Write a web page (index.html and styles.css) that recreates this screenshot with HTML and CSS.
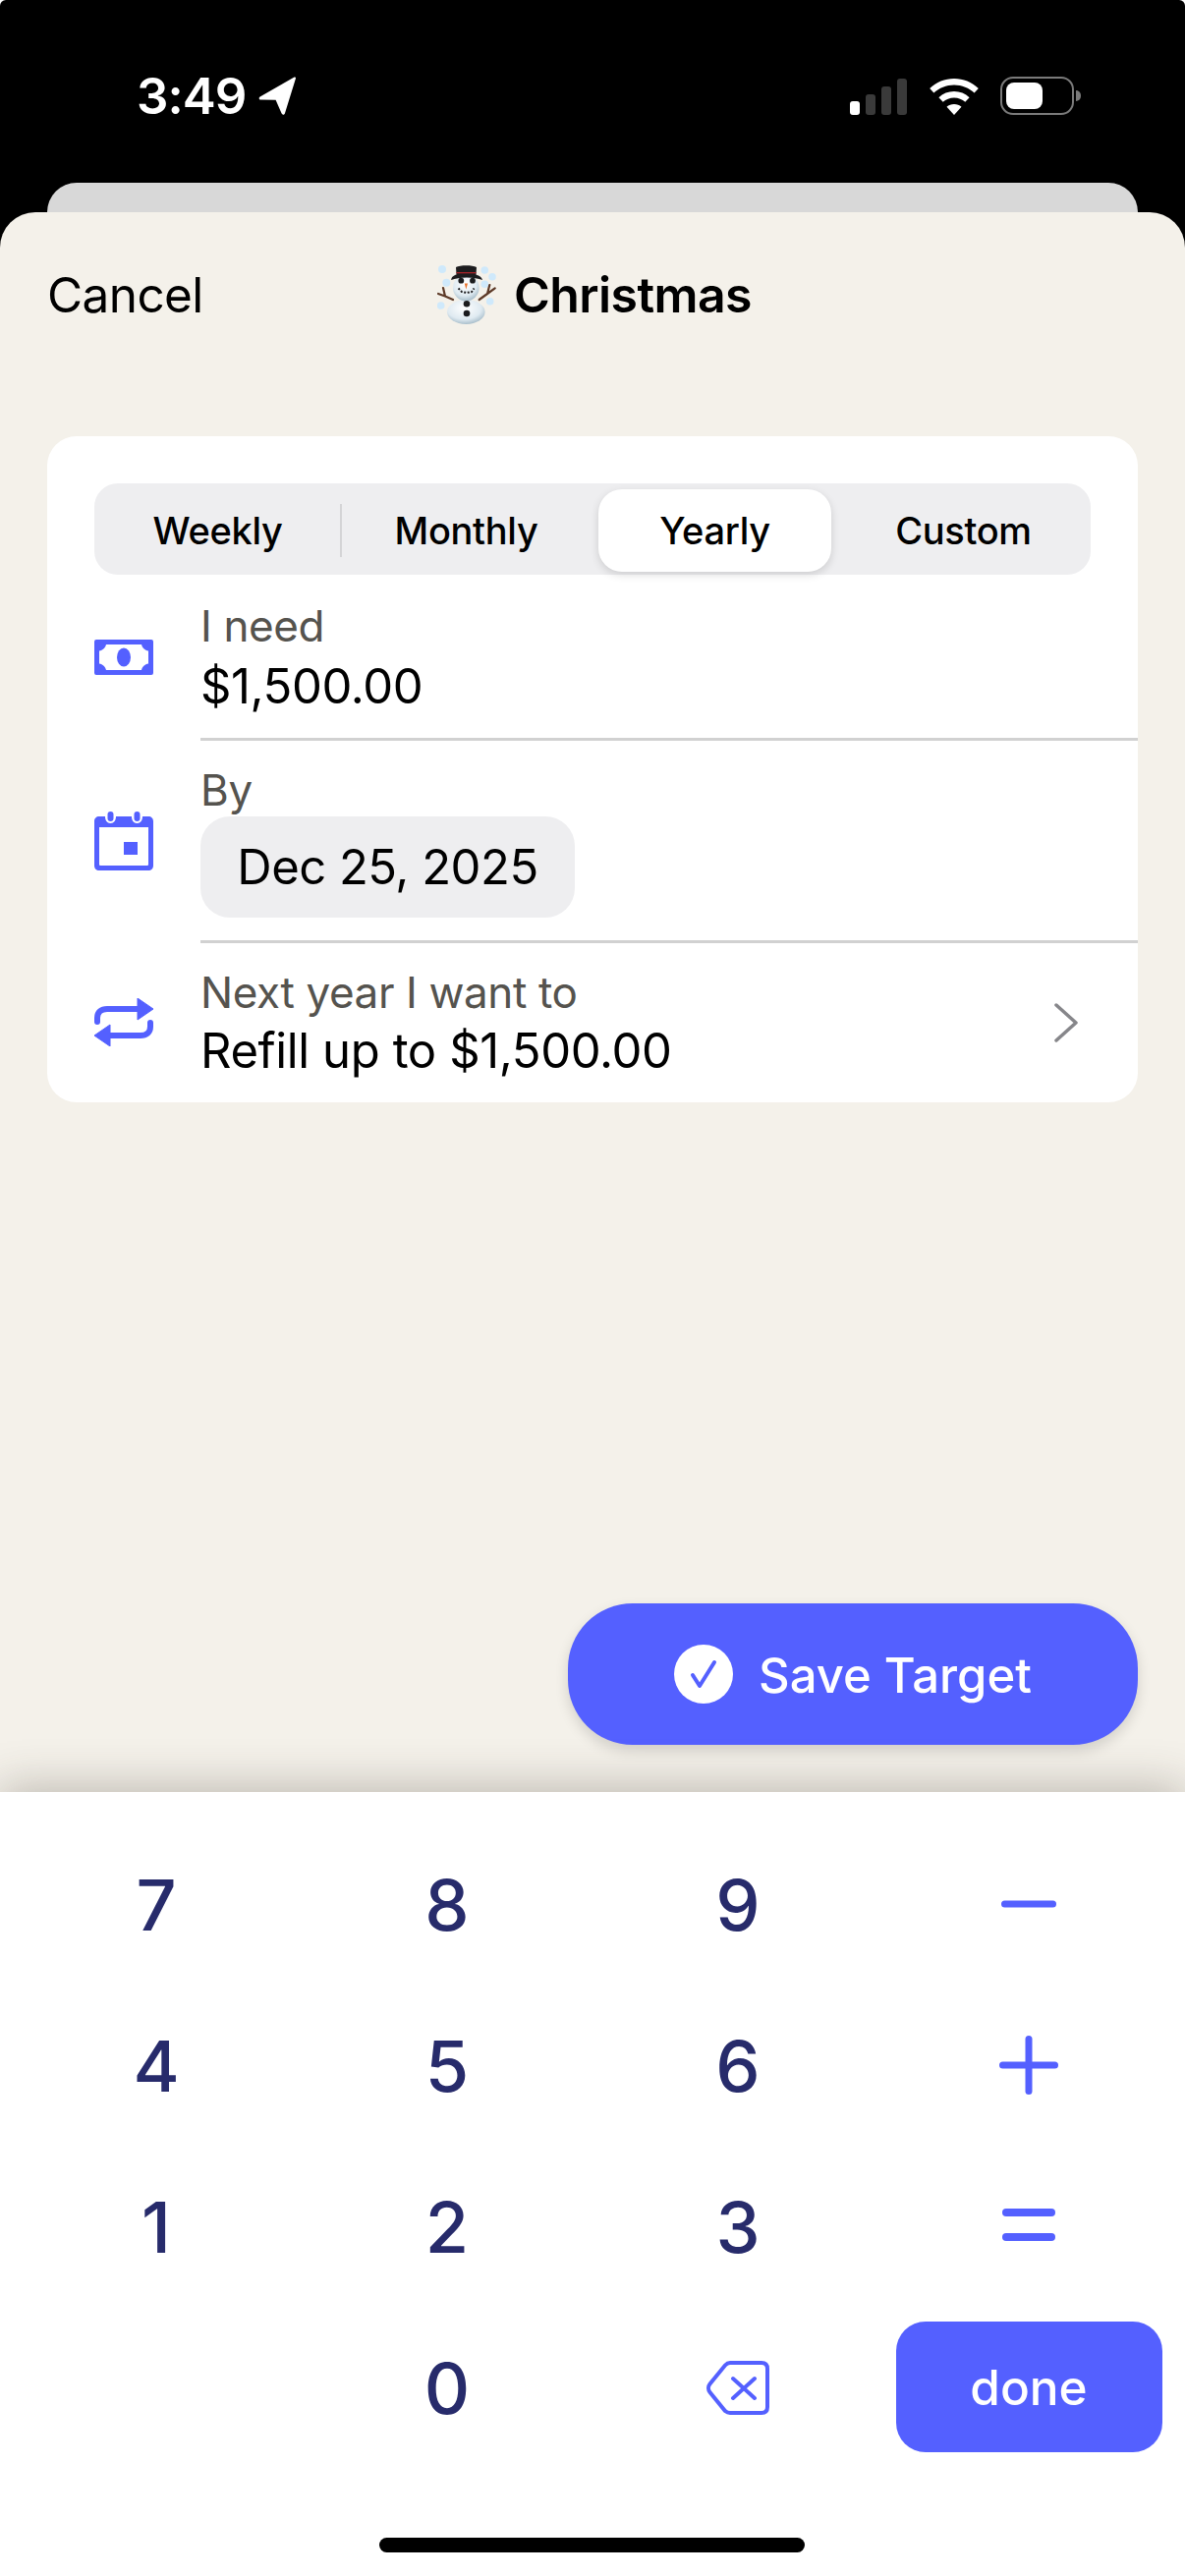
FILE: index.html
```html
<!DOCTYPE html>
<html lang="en">
<head>
    <meta charset="utf-8">
    <title>Christmas Target</title>
    <link rel="stylesheet" href="styles.css">
</head>
<body>
    <div class="screen">
        <div class="status-bar">
            <div class="status-left">
                <span class="time">3:49</span>
                <svg class="location-arrow" viewBox="0 0 38 39"><path d="M36.5 0.6 L1.6 20.4 C0 21.4 0.6 23.6 2.4 23.6 L17.6 23.8 L23.6 37.6 C24.3 39.2 26.3 39 26.9 37.4 L37.9 2 C38.3 0.8 37.5 0.2 36.5 0.6 Z" fill="#fff"/></svg>
            </div>
            <div class="status-right">
                <svg class="signal" viewBox="0 0 58 37">
                    <rect x="0" y="23" width="10" height="14" rx="3" fill="#fff"/>
                    <rect x="16" y="16" width="10" height="21" rx="3" fill="#3a3a3a"/>
                    <rect x="32" y="8" width="10" height="29" rx="3" fill="#3a3a3a"/>
                    <rect x="48" y="0" width="10" height="37" rx="3" fill="#3a3a3a"/>
                </svg>
                <svg class="wifi" viewBox="0 0 50 37">
                    <path d="M25 0 C34.5 0 43 3.6 49.8 10 L45.6 14.6 C40.2 9.4 33 6.4 25 6.4 C17 6.4 9.8 9.4 4.4 14.6 L0.2 10 C7 3.6 15.500 0 25 0 Z" fill="#fff"/>
                    <path d="M25 13 C31 13 36.400 15.200 40.600 19.200 L36.300 23.800 C33.300 21 29.400 19.400 25 19.400 C20.600 19.400 16.700 21 13.700 23.800 L9.400 19.200 C13.600 15.200 19 13 25 13 Z" fill="#fff"/>
                    <path d="M25 26 C27.900 26 30.500 27 32.500 28.800 L25 37 L17.500 28.800 C19.500 27 22.100 26 25 26 Z" fill="#fff"/>
                </svg>
                <div class="battery">
                    <div class="battery-fill"></div>
                    <div class="battery-nub"></div>
                </div>
            </div>
        </div>

        <div class="back-sheet"></div>

        <div class="sheet">
            <div class="sheet-header">
                <span class="cancel">Cancel</span>
                <div class="sheet-title">
                    <svg class="snowman" viewBox="0 0 60 60">
                        <defs>
                            <radialGradient id="snowBody" cx="0.45" cy="0.35" r="0.75">
                                <stop offset="0" stop-color="#ffffff"/>
                                <stop offset="0.6" stop-color="#dfeaf1"/>
                                <stop offset="1" stop-color="#8ea9b8"/>
                            </radialGradient>
                        </defs>
                        <g fill="#cfe9fb">
                            <circle cx="5" cy="4" r="4"/>
                            <circle cx="9.300" cy="17.700" r="4"/>
                            <circle cx="3.700" cy="41" r="3.800"/>
                            <circle cx="48.300" cy="5" r="3.800"/>
                            <circle cx="56" cy="11.700" r="3.800"/>
                            <circle cx="48.300" cy="19.300" r="3.800"/>
                            <circle cx="53.700" cy="36.700" r="3.800"/>
                        </g>
                        <path d="M16 35 L8 31.500 L1 29 M8 31.500 L6 23" stroke="#5d3a28" stroke-width="2.200" fill="none" stroke-linecap="round"/>
                        <path d="M42.700 35 L51 29 L58.700 23.300 M51 29 L53.300 20" stroke="#5d3a28" stroke-width="2.200" fill="none" stroke-linecap="round"/>
                        <ellipse cx="29.300" cy="47.500" rx="19.300" ry="12.500" fill="url(#snowBody)"/>
                        <circle cx="29.300" cy="23" r="13.300" fill="url(#snowBody)"/>
                        <path d="M14 15 C15 11 17 10.500 19.500 9.500 L19 2 C23 -0.500 36 -0.500 40 2 L39.500 9.500 C42 10.500 45 11.500 46 15 C38 11.500 22 11.500 14 15 Z" fill="#1c1c1e"/>
                        <rect x="19.500" y="7" width="20" height="1.300" fill="#a8242a"/>
                        <circle cx="24.300" cy="15.700" r="2.900" fill="#1c1c1e"/>
                        <circle cx="36" cy="15.700" r="2.900" fill="#1c1c1e"/>
                        <path d="M27.800 18.500 L31 18.500 L29.300 24.500 Z" fill="#e8702a"/>
                        <path d="M21.500 23.500 L25 27 L30 28 L35 27 L37.500 23.500" stroke="#1c1c1e" stroke-width="2" stroke-dasharray="2 1.600" fill="none"/>
                        <circle cx="30" cy="39.300" r="3.300" fill="#1c1c1e"/>
                        <circle cx="30" cy="49" r="3.300" fill="#1c1c1e"/>
                    </svg>
                    <span>Christmas</span>
                </div>
            </div>

            <div class="card">
                <div class="segments">
                    <div class="segment">Weekly</div>
                    <div class="segment-divider"></div>
                    <div class="segment">Monthly</div>
                    <div class="segment selected">Yearly</div>
                    <div class="segment">Custom</div>
                </div>

                <div class="row row-need">
                    <svg class="row-icon" viewBox="0 0 60 36">
                        <path fill-rule="evenodd" d="M2 0 H58 A2 2 0 0 1 60 2 V34 A2 2 0 0 1 58 36 H2 A2 2 0 0 1 0 34 V2 A2 2 0 0 1 2 0 Z M12 5 C11.500 8 8.500 11 5 11.500 V24.500 C8.500 25 11.500 28 12 31 H48 C48.500 28 51.500 25 55 24.500 V11.500 C51.500 11 48.500 8 48 5 Z" fill="#5460ff"/>
                        <ellipse cx="30" cy="18" rx="7" ry="9.500" fill="#5460ff"/>
                    </svg>
                    <div class="row-text">
                        <div class="row-label">I need</div>
                        <div class="row-value">$1,500.00</div>
                    </div>
                </div>

                <div class="row row-date">
                    <svg class="row-icon" viewBox="0 0 60 60">
                        <path fill-rule="evenodd" d="M5 5 H11 C11 9 13 12 16.500 12 C20 12 22 9 22 5 H38 C38 9 40 12 43.500 12 C47 12 49 9 49 5 H55 C58 5 60 7 60 10 V55 C60 58 58 60 55 60 H5 C2 60 0 58 0 55 V10 C0 7 2 5 5 5 Z M5 16 V53.500 C5 54.500 5.500 55 6.500 55 H53.500 C54.500 55 55 54.500 55 53.500 V16 Z" fill="#5460ff"/>
                        <rect x="13.500" y="0" width="6" height="10" rx="3" fill="#5460ff"/>
                        <rect x="40.500" y="0" width="6" height="10" rx="3" fill="#5460ff"/>
                        <rect x="30" y="31" width="14" height="13" fill="#5460ff"/>
                    </svg>
                    <div class="row-text">
                        <div class="row-label">By</div>
                        <div class="date-chip">Dec 25, 2025</div>
                    </div>
                </div>

                <div class="row row-repeat">
                    <svg class="row-icon" viewBox="0 0 60 49">
                        <path d="M3 24 V20 C3 14 7 11 13 11 H46" stroke="#5460ff" stroke-width="6" stroke-linecap="round" fill="none"/>
                        <path d="M44 0 L60 11 L44 22 Z" fill="#5460ff" stroke="#5460ff" stroke-width="1" stroke-linejoin="round"/>
                        <path d="M57 25 V29 C57 35 53 38 47 38 H14" stroke="#5460ff" stroke-width="6" stroke-linecap="round" fill="none"/>
                        <path d="M16 27 L0 38 L16 49 Z" fill="#5460ff" stroke="#5460ff" stroke-width="1" stroke-linejoin="round"/>
                    </svg>
                    <div class="row-text">
                        <div class="row-label">Next year I want to</div>
                        <div class="row-value">Refill up to $1,500.00</div>
                    </div>
                    <svg class="chevron" viewBox="0 0 24 40"><path d="M2 2 L22 20 L2 38" stroke="#86868a" stroke-width="3.500" fill="none" stroke-linecap="round" stroke-linejoin="round"/></svg>
                </div>
            </div>

            <div class="sheet-footer">
                <div class="save-button">
                    <svg class="save-check" viewBox="0 0 60 60">
                        <circle cx="30" cy="30" r="30" fill="#fff"/>
                        <path d="M19 31 L26 42 L41 18" stroke="#5460ff" stroke-width="4" fill="none" stroke-linecap="round" stroke-linejoin="round"/>
                    </svg>
                    <span class="save-label">Save Target</span>
                </div>
            </div>
        </div>

        <div class="keypad">
            <div class="key">7</div>
            <div class="key">8</div>
            <div class="key">9</div>
            <div class="key"><svg class="op-icon" viewBox="0 0 60 60"><rect x="2" y="26.500" width="56" height="7" rx="3.500" fill="#5460ff"/></svg></div>
            <div class="key">4</div>
            <div class="key">5</div>
            <div class="key">6</div>
            <div class="key"><svg class="op-icon" viewBox="0 0 60 60"><rect x="0" y="26.500" width="60" height="7" rx="3.500" fill="#5460ff"/><rect x="26.500" y="0" width="7" height="60" rx="3.500" fill="#5460ff"/></svg></div>
            <div class="key">1</div>
            <div class="key">2</div>
            <div class="key">3</div>
            <div class="key"><svg class="op-icon" viewBox="0 0 60 60"><rect x="3" y="12" width="54" height="8" rx="4" fill="#5460ff"/><rect x="3" y="37" width="54" height="8" rx="4" fill="#5460ff"/></svg></div>
            <div class="key"></div>
            <div class="key">0</div>
            <div class="key"><svg class="backspace" viewBox="0 0 64 55">
                <path d="M24 2 H56 C60 2 62 4 62 8 V47 C62 51 60 53 56 53 H24 C22 53 20.500 52.300 19 51 L3.500 32 C1.500 29.500 1.500 26 3.500 23.500 L19 4.500 C20.500 2.800 22 2 24 2 Z" stroke="#5460ff" stroke-width="4" fill="none"/>
                <path d="M27 18 L49 38 M49 18 L27 38" stroke="#5460ff" stroke-width="4" stroke-linecap="round" fill="none"/>
            </svg></div>
            <div class="key"><div class="done-button">done</div></div>
        </div>

        <div class="home-area"><div class="home-bar"></div></div>
    </div>
</body>
</html>
```

FILE: styles.css
```css
* {
    box-sizing: border-box;
}

body {
    margin: 0;
    font-family: Inter, "Liberation Sans", sans-serif;
    background-color: #fff;
    color: #000;
}

.screen {
    width: 1206px;
    height: 2622px;
    display: flex;
    flex-direction: column;
    overflow: hidden;
    background-color: #000;
    border-radius: 6px 6px 0 0;
}

/* status bar */
.status-bar {
    height: 186px;
    flex: none;
    padding: 78px 113px 0 139px;
    display: flex;
    justify-content: space-between;
    align-items: flex-start;
}

.status-left {
    display: flex;
    align-items: center;
    gap: 13px;
    height: 39px;
}

.time {
    color: #fff;
    font-size: 51px;
    font-weight: 600;
    line-height: 39px;
    letter-spacing: -1px;
}

.location-arrow {
    width: 38px;
    height: 39px;
}

.status-right {
    display: flex;
    align-items: center;
    height: 39px;
}

.signal {
    width: 58px;
    height: 37px;
    margin-top: 1px;
    margin-right: 23px;
}

.wifi {
    width: 50px;
    height: 37px;
    margin-top: 1px;
    margin-right: 22px;
}

.battery {
    width: 75px;
    height: 39px;
    padding: 4px;
    border: 2px solid #7a7a7a;
    border-radius: 13px;
    position: relative;
}

.battery-fill {
    width: 37px;
    height: 27px;
    background-color: #fff;
    border-radius: 8px;
}

.battery-nub {
    position: absolute;
    right: -9px;
    top: 12px;
    width: 5px;
    height: 11px;
    background-color: #7a7a7a;
    border-radius: 0 6px 6px 0;
}

.back-sheet {
    height: 60px;
    margin: 0 48px -30px;
    flex: none;
    background-color: #d8d8d8;
    border-radius: 30px 30px 0 0;
}

/* main sheet */
.sheet {
    flex: 1;
    position: relative;
    display: flex;
    flex-direction: column;
    padding: 0 48px;
    background-color: #f4f1ea;
    border-radius: 36px 36px 0 0;
}

.sheet-header {
    height: 228px;
    flex: none;
    padding-top: 48px;
    display: grid;
    grid-template-columns: 1fr auto 1fr;
    align-items: start;
}

.cancel {
    font-size: 49.500px;
    line-height: 72px;
    letter-spacing: -0.6px;
}

.sheet-title {
    display: flex;
    align-items: center;
    gap: 18px;
    height: 72px;
    padding-left: 4px;
    font-size: 50px;
    font-weight: 600;
    letter-spacing: -0.6px;
}

.snowman {
    width: 60px;
    height: 60px;
}

.card {
    flex: none;
    background-color: #fff;
    border-radius: 30px;
    padding: 48px 0 0 48px;
    height: 678px;
}

.segments {
    width: 1014px;
    height: 93px;
    background-color: #eeeef0;
    border-radius: 24px;
    padding: 6px 0 3px;
    display: flex;
    align-items: stretch;
    position: relative;
}

.segment {
    width: 253px;
    font-size: 38px;
    font-weight: 450;
    letter-spacing: -0.3px;
    display: flex;
    align-items: center;
    justify-content: center;
}

.segment:first-child {
    margin-left: -1px;
}

.segment.selected {
    width: 237px;
    margin: 0 8px;
    background-color: #fff;
    border-radius: 24px;
    box-shadow: 0 3px 8px rgba(0, 0, 0, 0.14);
}

.segment-divider {
    position: absolute;
    left: 250px;
    top: 21px;
    width: 2px;
    height: 54px;
    background-color: #d4d4d6;
}

.row {
    display: flex;
    align-items: center;
    position: relative;
}

.row-need {
    height: 166px;
}

.row-date {
    height: 206px;
}

.row-repeat {
    height: 165px;
}

.row-date::before,
.row-repeat::before {
    content: "";
    position: absolute;
    left: 108px;
    right: 0;
    top: 0;
    height: 3px;
    background-color: #d1d1d1;
}

.row-icon {
    width: 60px;
    flex: none;
    margin-top: 2px;
    margin-right: 48px;
}

.row-date .row-icon {
    margin-top: 4px;
}

.row-text {
    flex: 1;
}

.row-need .row-text,
.row-repeat .row-text {
    padding-top: 3px;
}

.row-date .row-text {
    padding-top: 2px;
}

.row-label {
    font-size: 44px;
    line-height: 54px;
    color: #55534e;
    letter-spacing: -0.4px;
}

.row-value {
    font-size: 49px;
    line-height: 60px;
    letter-spacing: -0.4px;
}

.row-need .row-value {
    margin-top: 5px;
}

.row-repeat .row-value {
    margin-top: 3px;
}

.date-chip {
    width: 381px;
    height: 103px;
    line-height: 103px;
    text-align: center;
    font-size: 49px;
    letter-spacing: -0.5px;
    background-color: #eeeef0;
    border-radius: 30px;
}

.chevron {
    width: 24px;
    height: 40px;
    flex: none;
    margin-top: 2px;
    margin-right: 61px;
}

.sheet-footer {
    flex: 1;
    display: flex;
    justify-content: flex-end;
    align-items: flex-start;
    padding-top: 510px;
}

.save-button {
    width: 580px;
    height: 144px;
    background-color: #5460ff;
    border-radius: 66px;
    box-shadow: 0 6px 14px rgba(0, 0, 0, 0.14);
    color: #fff;
    font-size: 49px;
    font-weight: 500;
    display: flex;
    align-items: center;
    justify-content: center;
    gap: 26px;
}

.save-label {
    margin-top: 2px;
}

.save-check {
    width: 60px;
    height: 60px;
}

/* keypad */
.keypad {
    height: 798px;
    flex: none;
    background-color: #fff;
    padding: 32px 13px 0 11px;
    display: grid;
    grid-template-columns: repeat(4, 296px);
    grid-template-rows: repeat(4, 164px);
    box-shadow: 0 -4px 44px rgba(60, 50, 40, 0.3);
    position: relative;
    color: #272b6b;
    font-size: 72px;
    font-weight: 450;
}

.key {
    display: flex;
    align-items: center;
    justify-content: center;
}

.op-icon {
    width: 60px;
    height: 60px;
}

.backspace {
    width: 64px;
    height: 55px;
}

.done-button {
    width: 271px;
    height: 133px;
    margin-bottom: 1px;
    background-color: #5460ff;
    border-radius: 30px;
    color: #fff;
    font-size: 49.500px;
    font-weight: 500;
    display: flex;
    align-items: center;
    justify-content: center;
}

.home-area {
    height: 0;
    position: relative;
}

.home-bar {
    position: absolute;
    left: 386px;
    top: -39px;
    width: 433px;
    height: 15px;
    background-color: #000;
    border-radius: 8px;
}
```
